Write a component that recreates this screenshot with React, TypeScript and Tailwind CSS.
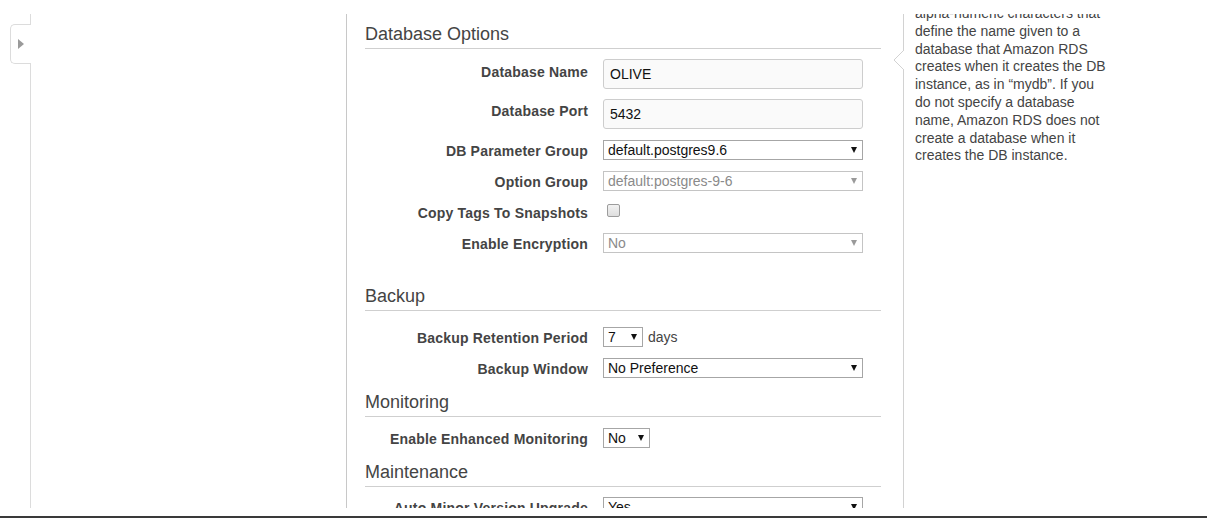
import React from "react";

const HELP_LINES = [
  "alpha-numeric characters that",
  "define the name given to a",
  "database that Amazon RDS",
  "creates when it creates the DB",
  "instance, as in \u201cmydb\u201d. If you",
  "do not specify a database",
  "name, Amazon RDS does not",
  "create a database when it",
  "creates the DB instance.",
];

function Heading({ children, className = "" }: { children: React.ReactNode; className?: string }) {
  return (
    <h2 className={`text-[18px] leading-[22px] text-[#444] pb-[3px] border-b border-[#cfcfcf] ${className}`}>
      {children}
    </h2>
  );
}

function Row({
  label,
  children,
  className = "",
  labelPad = "pt-0",
  height = "h-[20px]",
}: {
  label: string;
  children: React.ReactNode;
  className?: string;
  labelPad?: string;
  height?: string;
}) {
  return (
    <div className={`flex items-start gap-[15px] ${height} ${className}`}>
      <div
        className={`w-[223px] shrink-0 text-right text-[14px] leading-[20px] font-bold tracking-[0.2px] text-[#444] whitespace-nowrap ${labelPad}`}
      >
        {label}
      </div>
      {children}
    </div>
  );
}

function TextInput({ value }: { value: string }) {
  return (
    <div className="w-[260px] h-[30px] rounded-[3px] border border-[#cdcdcd] bg-[#fafafa] pl-[6px] flex items-center text-[14px] text-[#111]">
      {value}
    </div>
  );
}

function Select({
  value,
  width = "w-[260px]",
  disabled,
}: {
  value: string;
  width?: string;
  disabled?: boolean;
}) {
  return (
    <div
      className={`${width} h-[20px] border bg-white flex items-center justify-between pl-[4px] pr-[5px] text-[14px] leading-[18px] ${
        disabled ? "border-[#c4c4c4] text-[#8a8a8a]" : "border-[#a6a6a6] text-[#111]"
      }`}
    >
      <span>{value}</span>
      <span
        className={`w-0 h-0 border-x-[3.5px] border-x-transparent border-t-[6px] ${
          disabled ? "border-t-[#9a9a9a]" : "border-t-[#111]"
        }`}
      />
    </div>
  );
}

export default function App() {
  return (
    <div className="w-[1207px] h-[518px] bg-white overflow-hidden font-['Liberation_Sans',Arial,sans-serif]">
      <div className="h-[14px]" />
      <div className="h-[494px] flex overflow-hidden">
        {/* Left sidebar */}
        <div className="w-[31px] shrink-0 flex flex-col items-end">
          <div className="w-px h-[10px] bg-[#dcdcdc]" />
          <div className="w-[21px] h-[40px] border border-r-0 border-[#dcdcdc] rounded-l-[5px] flex items-center justify-center pr-[1px]">
            <span className="w-0 h-0 border-y-[5px] border-y-transparent border-l-[6px] border-l-[#9a9a9a]" />
          </div>
          <div className="w-px flex-1 bg-[#dcdcdc]" />
        </div>

        <div className="w-[315px] shrink-0" />

        {/* Main form */}
        <div className="w-[557px] shrink-0 border-l border-[#c8c8c8] pl-[18px]">
          <div className="w-[516px] pt-[9px]">
            <Heading>Database Options</Heading>

            <Row label="Database Name" className="mt-[10px]" height="h-[30px]" labelPad="pt-[3px]">
              <TextInput value="OLIVE" />
            </Row>
            <Row label="Database Port" className="mt-[10px]" height="h-[30px]" labelPad="pt-[2px]">
              <TextInput value="5432" />
            </Row>
            <Row label="DB Parameter Group" className="mt-[11px]" labelPad="pt-[1px]">
              <Select value="default.postgres9.6" />
            </Row>
            <Row label="Option Group" className="mt-[11px]" labelPad="pt-[1px]">
              <Select value="default:postgres-9-6" disabled />
            </Row>
            <Row label="Copy Tags To Snapshots" className="mt-[12px]">
              <span className="mt-[1px] ml-[4px] w-[13px] h-[13px] rounded-[2px] border border-[#9c9c9c] bg-gradient-to-b from-[#f2f2f2] to-[#dedede]" />
            </Row>
            <Row label="Enable Encryption" className="mt-[10px]" labelPad="pt-[1px]">
              <Select value="No" disabled />
            </Row>

            <Heading className="mt-[32px]">Backup</Heading>
            <Row label="Backup Retention Period" className="mt-[16px]" labelPad="pt-[1px]">
              <div className="flex items-center gap-[5px]">
                <Select value="7" width="w-[40px]" />
                <span className="text-[14px] leading-[18px] text-[#444]">days</span>
              </div>
            </Row>
            <Row label="Backup Window" className="mt-[11px]" labelPad="pt-[1px]">
              <Select value="No Preference" />
            </Row>

            <Heading className="mt-[13px]">Monitoring</Heading>
            <Row label="Enable Enhanced Monitoring" className="mt-[11px]" labelPad="pt-[1px]">
              <Select value="No" width="w-[47px]" />
            </Row>

            <Heading className="mt-[13px]">Maintenance</Heading>
            <Row label="Auto Minor Version Upgrade" className="mt-[10px]" labelPad="pt-[1px]">
              <Select value="Yes" />
            </Row>
          </div>
        </div>

        {/* Help panel */}
        <div className="relative w-[250px] shrink-0 border-l border-[#d2d2d2] pl-[11px]">
          <svg
            className="absolute left-[-11px] top-[36px]"
            width="12"
            height="20"
            viewBox="0 0 12 20"
          >
            <path d="M11 0 L1 10 L11 20 Z" fill="#fff" />
            <path d="M11 0 L1 10 L11 20" fill="none" stroke="#d2d2d2" strokeWidth="1" />
          </svg>
          <div className="-mt-[9px] text-[14px] leading-[17.8px] text-[#444]">
            {HELP_LINES.map((l, i) => (
              <div key={i} className="whitespace-nowrap">
                {l}
              </div>
            ))}
          </div>
        </div>
      </div>
      <div className="h-[8px]" />
      <div className="h-[2px] bg-[#3a3a3a]" />
    </div>
  );
}
